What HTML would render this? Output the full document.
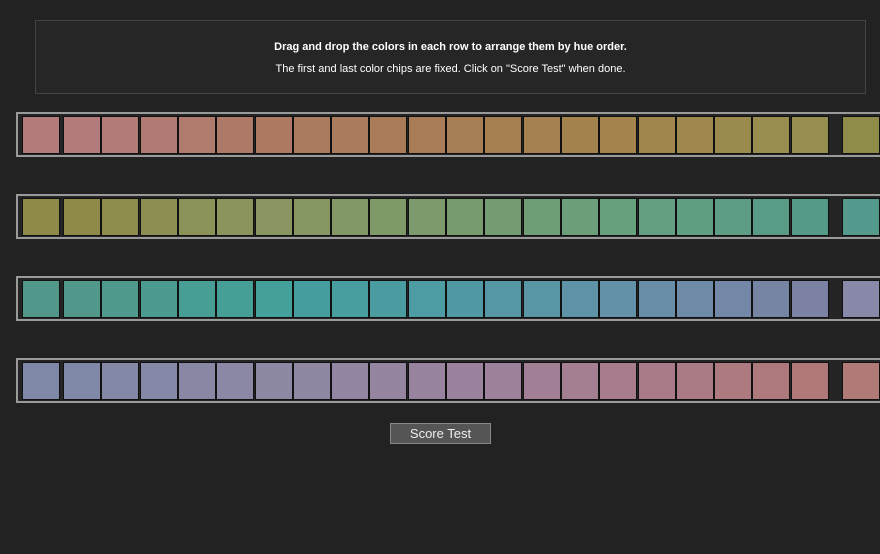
<!DOCTYPE html>
<html><head><style>
body{margin:0;width:880px;height:554px;background:#222;overflow:hidden;font-family:"Liberation Sans",Arial,sans-serif;position:relative}
.hdr{position:absolute;left:35px;top:20px;width:829px;height:72px;border:1px solid #444;background:#262626;color:#fff;text-align:center;font-size:11px}
.hdr b{position:absolute;top:20px;left:0;right:0}
.hdr span{position:absolute;top:42px;left:0;right:0}
.row{position:absolute;left:16px;width:880px;height:41px;border:2px solid #9a9a9a;border-right:none;background:#242424}
.chip{position:absolute;top:2px;width:36px;height:36px;border:1px solid #111;box-sizing:content-box}
.btn{position:absolute;left:390px;top:423px;width:99px;height:19px;border:1px solid #888;background:#555;color:#eee;font-size:13px;text-align:center;line-height:19px}
</style></head><body>
<div class="hdr"><b>Drag and drop the colors in each row to arrange them by hue order.</b><span>The first and last color chips are fixed. Click on "Score Test" when done.</span></div>
<div id="rows"></div>
<div class="btn">Score Test</div>
<script>
function h(c){return [parseInt(c.substr(1,2),16),parseInt(c.substr(3,2),16),parseInt(c.substr(5,2),16)]}
function interp(keys,t){var n=keys.length-1;var s=t*n;var i=Math.min(Math.floor(s),n-1);var f=s-i;var a=h(keys[i]),b=h(keys[i+1]);return 'rgb('+a.map(function(v,k){return Math.round(v+(b[k]-v)*f)}).join(',')+')'}
var rows=[
 [["#b27c7c","#ac7a64","#a87c54","#a2844c","#968e50"],"#8e8c48"],
 [["#8f8a48","#8a9660","#7a9a6c","#66a07e","#559a88"],"#539a8c"],
 [["#52988a","#42a09a","#4e9aa4","#6490a8","#7c82a4"],"#8888a8"],
 [["#8088a8","#8c88a4","#9a84a0","#a87c8c","#b07878"],"#b07a76"]];
var out='';
rows.forEach(function(r,ri){
 var top=112+ri*82;
 out+='<div class="row" style="top:'+top+'px">';
 out+='<div class="chip" style="left:4px;background:'+r[0][0]+'"></div>';
 for(var i=0;i<20;i++){var t=i/19;out+='<div class="chip" style="left:'+(45+Math.round(i*38.3))+'px;background:'+interp(r[0],t)+'"></div>';}
 out+='<div class="chip" style="left:824px;background:'+r[1]+'"></div>';
 out+='</div>';
});
document.getElementById('rows').innerHTML=out;
</script>
</body></html>
